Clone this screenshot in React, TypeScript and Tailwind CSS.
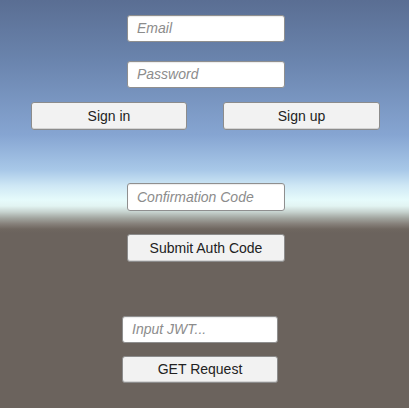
import React from "react";

const font = { fontFamily: '"Liberation Sans", Arial, sans-serif' };

function Field({ placeholder, className }: { placeholder: string; className: string }) {
  return (
    <div
      className={`flex items-center rounded-[3px] border border-[#8f8f8f] bg-white pl-[9px] text-[14px] italic text-[#8c8c8c] shadow-[inset_0_1px_1px_rgba(0,0,0,0.08)] ${className}`}
    >
      {placeholder}
    </div>
  );
}

function Btn({ label, className }: { label: string; className: string }) {
  return (
    <div
      className={`flex items-center justify-center rounded-[3px] border border-[#8c8c8c] bg-[#f2f2f2] text-[14px] text-[#222222] shadow-[inset_0_-1px_0_rgba(0,0,0,0.12)] ${className}`}
    >
      {label}
    </div>
  );
}

export default function App() {
  return (
    <div
      style={font}
      className="flex h-[408px] w-[409px] flex-col overflow-hidden bg-[linear-gradient(to_bottom,#5a6e93_0px,#6a84ad_60px,#86a5d2_135px,#a8c8e8_170px,#cfe8f5_186px,#e6fbfb_200px,#e2f4f2_206px,#c6d2ce_212px,#a2a6a0_218px,#86807a_224px,#6f6760_229px,#6b635d_233px,#6b635d_408px)] pt-[15px]"
    >
      <Field placeholder="Email" className="ml-[127px] h-[27px] w-[158px]" />
      <Field placeholder="Password" className="ml-[127px] mt-[19px] h-[27px] w-[158px]" />
      <div className="mt-[14px] flex">
        <Btn label="Sign in" className="ml-[31px] h-[28px] w-[156px]" />
        <Btn label="Sign up" className="ml-[36px] h-[28px] w-[157px]" />
      </div>
      <Field placeholder="Confirmation Code" className="ml-[127px] mt-[53px] h-[28px] w-[158px]" />
      <Btn label="Submit Auth Code" className="ml-[127px] mt-[23px] h-[28px] w-[158px]" />
      <Field placeholder="Input JWT..." className="ml-[122px] mt-[54px] h-[27px] w-[156px]" />
      <Btn label="GET Request" className="ml-[122px] mt-[13px] h-[27px] w-[156px]" />
    </div>
  );
}
